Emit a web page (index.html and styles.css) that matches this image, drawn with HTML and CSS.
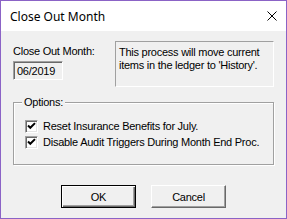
FILE: index.html
```html
<!DOCTYPE html>
<html lang="en">

<head>
  <meta charset="UTF-8" />
  <title>Close Out Month</title>
  <link rel="stylesheet" href="styles.css">
</head>

<body>
  <div class="window">
    <div class="titlebar">
      <span class="title">Close Out Month</span>
      <svg class="close" width="10" height="10" viewBox="0 0 10 10">
        <path d="M0.5 0.5 L9.5 9.5 M9.5 0.5 L0.5 9.5" stroke="#000" stroke-width="1" fill="none" />
      </svg>
    </div>

    <div class="content">
      <div class="top">
        <div class="month">
          <div class="label">Close Out Month:</div>
          <div class="field">06/2019</div>
        </div>
        <div class="note">This process will move current items in the ledger to 'History'.</div>
      </div>

      <!-- Opciones -->
      <div class="group">
        <span class="legend">Options:</span>
        <div class="check">
          <span class="box">
            <svg width="11" height="11" viewBox="0 0 11 11">
              <path d="M2 4.5 L4.3 6.8 L9 2.1" stroke="#000" stroke-width="2" fill="none" />
            </svg>
          </span>
          <span>Reset Insurance Benefits for July.</span>
        </div>
        <div class="check">
          <span class="box">
            <svg width="11" height="11" viewBox="0 0 11 11">
              <path d="M2 4.5 L4.3 6.8 L9 2.1" stroke="#000" stroke-width="2" fill="none" />
            </svg>
          </span>
          <span>Disable Audit Triggers During Month End Proc.</span>
        </div>
      </div>

      <div class="buttons">
        <button class="btn default">OK</button>
        <button class="btn">Cancel</button>
      </div>
    </div>
  </div>
</body>

</html>
```

FILE: styles.css
```css
html,
body {
  margin: 0;
  padding: 0;
  background: #f0f0f0;
}

:root {
  --face: #f0f0f0;
  --shadow: #a0a0a0;
  --dark: #696969;
  --accent: #8b63c6;
}

.window {
  width: 287px;
  height: 219px;
  box-sizing: border-box;
  border: 1px solid var(--accent);
  background: var(--face);
  font-family: "Liberation Sans", Arial, sans-serif;
  font-size: 11px;
  letter-spacing: -0.25px;
  color: #000;
}

.titlebar {
  height: 30px;
  background: #fff;
  display: flex;
  align-items: center;
  justify-content: space-between;
  padding: 0 9px 0 9px;
  letter-spacing: 0;
}

.title {
  font-family: "Noto Sans", sans-serif;
  font-size: 12px;
}

.close {
  display: block;
}

.content {
  padding: 10px 12px 0 12px;
}

.top {
  display: flex;
  height: 46px;
}

.month {
  width: 102px;
  padding-top: 4px;
}

.label {
  line-height: 13px;
}

.field {
  margin-top: 3px;
  width: 50px;
  height: 19px;
  box-sizing: border-box;
  border-top: 1px solid var(--shadow);
  border-left: 1px solid var(--shadow);
  border-right: 1px solid #fff;
  border-bottom: 1px solid #fff;
  box-shadow: inset 1px 1px 0 var(--dark);
  padding: 3px 0 0 3px;
  line-height: 13px;
}

.note {
  width: 159px;
  box-sizing: border-box;
  border-top: 1px solid var(--shadow);
  border-left: 1px solid var(--shadow);
  border-right: 1px solid #fff;
  border-bottom: 1px solid #fff;
  padding: 4px 3px 0 3px;
  line-height: 13px;
}

.group {
  position: relative;
  margin-top: 15px;
  height: 63px;
  box-sizing: border-box;
  border: 1px solid var(--shadow);
  box-shadow: inset 1px 1px 0 #fff, 1px 1px 0 #fff;
  padding: 15px 0 0 11px;
}

.legend {
  position: absolute;
  top: -7px;
  left: 8px;
  padding: 0 2px;
  background: var(--face);
  line-height: 13px;
}

.check {
  display: flex;
  align-items: center;
  height: 16px;
  gap: 5px;
}

.box {
  width: 13px;
  height: 13px;
  box-sizing: border-box;
  background: #fff;
  border-top: 1px solid var(--shadow);
  border-left: 1px solid var(--shadow);
  border-right: 1px solid #fff;
  border-bottom: 1px solid #fff;
  box-shadow: inset 1px 1px 0 var(--dark), inset -1px -1px 0 #e3e3e3;
  display: flex;
  align-items: center;
  justify-content: center;
}

.box svg {
  display: block;
}

.buttons {
  display: flex;
  justify-content: center;
  gap: 15px;
  margin-top: 20px;
}

.btn {
  width: 75px;
  height: 23px;
  box-sizing: border-box;
  background: var(--face);
  font-family: "Liberation Sans", Arial, sans-serif;
  font-size: 11px;
  letter-spacing: -0.25px;
  color: #000;
  padding: 0;
  border-top: 1px solid #fff;
  border-left: 1px solid #fff;
  border-right: 1px solid var(--dark);
  border-bottom: 1px solid var(--dark);
  box-shadow: inset -1px -1px 0 var(--shadow);
}

.btn.default {
  border: 1px solid #000;
  box-shadow: inset 1px 1px 0 #fff, inset -1px -1px 0 var(--dark), inset -2px -2px 0 var(--shadow);
}
```
